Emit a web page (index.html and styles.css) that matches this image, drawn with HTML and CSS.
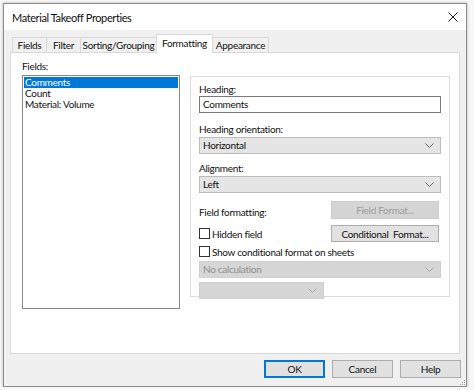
FILE: index.html
```html
<!DOCTYPE html>
<html lang="en">
<head>
    <meta charset="UTF-8">
    <title>Material Takeoff Properties</title>
    <link rel="stylesheet" href="styles.css">
</head>
<body>
    <div class="window">
        <div class="titlebar">
            <span class="title">Material Takeoff Properties</span>
            <svg class="close" width="10" height="10" viewBox="0 0 10 10">
                <path d="M0.5 0.5 L9.5 9.5 M9.5 0.5 L0.5 9.5" stroke="#1a1a1a" stroke-width="1" fill="none"/>
            </svg>
        </div>
        <div class="tabs">
            <div class="tab t-fields">Fields</div>
            <div class="tab t-filter">Filter</div>
            <div class="tab t-sorting">Sorting/Grouping</div>
            <div class="tab t-format active">Formatting</div>
            <div class="tab t-appear">Appearance</div>
        </div>
        <div class="panel">
            <div class="fields-col">
                <div class="label">Fields:</div>
                <div class="listbox">
                    <div class="item selected">Comments</div>
                    <div class="item">Count</div>
                    <div class="item">Material: Volume</div>
                </div>
            </div>
            <div class="group">
                <div class="label">Heading:</div>
                <div class="textbox">Comments</div>

                <div class="label gap-lg">Heading orientation:</div>
                <div class="select">
                    <span>Horizontal</span>
                    <svg width="9" height="5" viewBox="0 0 9 5"><path d="M0.5 0.5 L4.5 4.5 L8.5 0.5" stroke="#6a6a6a" fill="none"/></svg>
                </div>

                <div class="label gap-md">Alignment:</div>
                <div class="select">
                    <span>Left</span>
                    <svg width="9" height="5" viewBox="0 0 9 5"><path d="M0.5 0.5 L4.5 4.5 L8.5 0.5" stroke="#6a6a6a" fill="none"/></svg>
                </div>

                <div class="row format-row">
                    <span class="row-label">Field formatting:</span>
                    <button class="btn disabled">Field Format...</button>
                </div>
                <div class="row hidden-row">
                    <label class="check"><span class="box"></span>Hidden field</label>
                    <button class="btn">Conditional&nbsp; Format...</button>
                </div>
                <div class="row show-row">
                    <label class="check"><span class="box"></span>Show conditional format on sheets</label>
                </div>
                <div class="select disabled calc">
                    <span>No calculation</span>
                    <svg width="9" height="5" viewBox="0 0 9 5"><path d="M0.5 0.5 L4.5 4.5 L8.5 0.5" stroke="#a8a8a8" fill="none"/></svg>
                </div>
                <div class="select disabled small">
                    <span></span>
                    <svg width="9" height="5" viewBox="0 0 9 5"><path d="M0.5 0.5 L4.5 4.5 L8.5 0.5" stroke="#a8a8a8" fill="none"/></svg>
                </div>
            </div>
        </div>
        <div class="footer">
            <button class="btn default">OK</button>
            <button class="btn">Cancel</button>
            <button class="btn">Help</button>
            <svg class="grip" width="5" height="5" viewBox="0 0 5 5">
                <rect x="4" y="0" width="1" height="1" fill="#a0a0a0"/>
                <rect x="2" y="2" width="1" height="1" fill="#a0a0a0"/>
                <rect x="4" y="2" width="1" height="1" fill="#a0a0a0"/>
                <rect x="0" y="4" width="1" height="1" fill="#a0a0a0"/>
                <rect x="2" y="4" width="1" height="1" fill="#a0a0a0"/>
                <rect x="4" y="4" width="1" height="1" fill="#a0a0a0"/>
            </svg>
        </div>
    </div>
</body>
</html>
```

FILE: styles.css
```css
body {
    margin: 0;
    padding: 0;
    background-color: #f7f7f7;
    font-family: Lato, 'Open Sans', sans-serif;
    font-size: 10px;
    letter-spacing: -0.3px;
    color: #111;
}
.window {
    position: relative;
    margin: 3px 0 0 3px;
    width: 462px;
    height: 382px;
    border: 1px solid #8c8c8c;
    background-color: #f0f0f0;
    box-shadow: 0 0 3px rgba(0,0,0,0.25);
    display: flex;
    flex-direction: column;
}
.titlebar {
    height: 26px;
    background-color: #fff;
    display: flex;
    align-items: center;
    justify-content: space-between;
    padding: 0 8px 0 8px;
}
.title {
    font-size: 11px;
    letter-spacing: -0.4px;
}
.tabs {
    display: flex;
    align-items: flex-end;
    height: 22px;
    padding-left: 8px;
    position: relative;
    z-index: 1;
}
.tab {
    height: 15px;
    line-height: 15px;
    text-align: center;
    border: 1px solid #d9d9d9;
    border-bottom: none;
    border-left: none;
    background-color: #f0f0f0;
    box-sizing: border-box;
}
.tab:first-child {
    border-left: 1px solid #d9d9d9;
}
.t-fields { width: 35px; }
.t-filter { width: 34px; }
.t-sorting { width: 76px; }
.t-format { width: 57px; }
.t-appear { width: 56px; }
.tab.active {
    height: 19px;
    line-height: 17px;
    background-color: #fff;
    border-left: 1px solid #d9d9d9;
    margin-left: -1px;
    margin-bottom: -1px;
}
.panel {
    margin: 0 6px 0 6px;
    height: 300px;
    background-color: #fff;
    border: 1px solid #d9d9d9;
    display: flex;
    padding: 0 9px 0 11px;
}
.fields-col {
    width: 158px;
    padding-top: 8px;
}
.label {
    line-height: 11px;
    height: 11px;
}
.listbox {
    margin-top: 3px;
    height: 230px;
    border: 1px solid #828790;
    padding: 1px;
}
.item {
    height: 11px;
    line-height: 11px;
    padding-left: 1px;
}
.item.selected {
    background-color: #0078d7;
    color: #fff;
}
.group {
    margin-left: 10px;
    margin-top: 23px;
    width: 242px;
    height: 212px;
    border: 1px solid #dcdcdc;
    padding: 7px 8px 0 8px;
}
.textbox {
    margin-top: 1px;
    height: 15px;
    line-height: 15px;
    border: 1px solid #7a7a7a;
    padding-left: 3px;
}
.gap-lg {
    margin-top: 11px;
}
.gap-md {
    margin-top: 9px;
}
.select {
    margin-top: 2px;
    height: 15px;
    line-height: 15px;
    border: 1px solid #bcbcbc;
    background-color: #e5e5e5;
    padding: 0 6px 0 3px;
    display: flex;
    align-items: center;
    justify-content: space-between;
}
.select.disabled {
    background-color: #d6d6d6;
    border-color: #d0d0d0;
    color: #8e8e8e;
}
.select.calc {
    margin-top: 4px;
}
.select.small {
    margin-top: 4px;
    width: 114px;
}
.row {
    display: flex;
    align-items: center;
    justify-content: space-between;
}
.format-row {
    margin-top: 8px;
    height: 18px;
}
.row-label {
    padding-top: 4px;
}
.hidden-row {
    margin-top: 6px;
    height: 17px;
}
.show-row {
    margin-top: 4px;
    height: 11px;
}
.check {
    display: flex;
    align-items: center;
}
.box {
    width: 9px;
    height: 9px;
    border: 1px solid #333;
    background-color: #fff;
    margin-right: 2px;
}
.btn {
    font-family: inherit;
    font-size: 10px;
    letter-spacing: -0.3px;
    color: #111;
    background-color: #e1e1e1;
    border: 1px solid #adadad;
    padding: 0;
    margin: 0 2px 0 0;
    width: 108px;
    height: 100%;
}
.btn.disabled {
    background-color: #d4d4d4;
    border-color: #cdcdcd;
    color: #9c9c9c;
}
.footer {
    display: flex;
    justify-content: flex-end;
    gap: 7px;
    margin-top: 6px;
    padding-right: 5px;
    height: 18px;
}
.footer .btn {
    width: 61px;
    margin: 0;
}
.btn.default {
    border-color: #0078d7;
    box-shadow: inset 0 0 0 1px #0078d7;
}
.grip {
    position: absolute;
    right: 1px;
    bottom: 1px;
}
```
